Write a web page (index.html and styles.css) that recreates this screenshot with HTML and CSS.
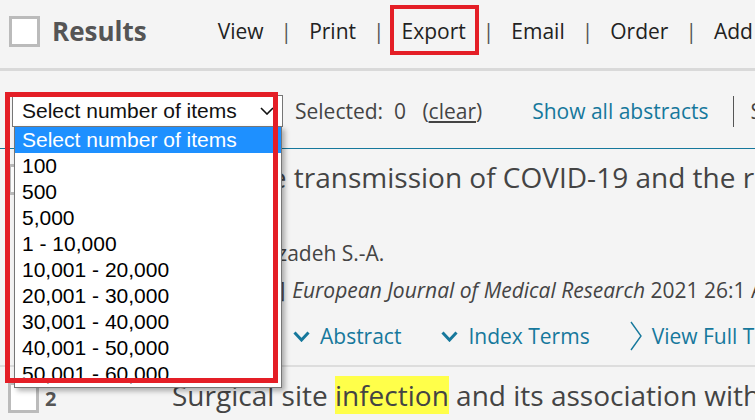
FILE: index.html
```html
<!DOCTYPE html>
<html lang="en">
<head>
    <meta charset="UTF-8">
    <meta name="viewport" content="width=device-width, initial-scale=1.0">
    <title>Results</title>
    <link rel="stylesheet" href="styles.css">
</head>
<body>
    <div class="page">
        <!-- Results header -->
        <header class="results-bar">
            <span class="checkbox big"></span>
            <h1>Results</h1>
            <nav class="actions">
                <a href="#">View</a><span class="sep">|</span>
                <a href="#">Print</a><span class="sep">|</span>
                <a href="#" class="export">Export</a><span class="sep">|</span>
                <a href="#">Email</a><span class="sep">|</span>
                <a href="#">Order</a><span class="sep">|</span>
                <a href="#">Add to My List</a>
            </nav>
        </header>

        <!-- Toolbar -->
        <div class="toolbar">
            <div class="select-wrap">
                <div class="select">
                    <span>Select number of items</span>
                    <svg class="select-arrow" width="14" height="8" viewBox="0 0 14 8"><path d="M1 1 L7 7 L13 1" fill="none" stroke="#111" stroke-width="1.6"/></svg>
                </div>
                <ul class="select-list">
                    <li class="picked">Select number of items</li>
                    <li>100</li>
                    <li>500</li>
                    <li>5,000</li>
                    <li>1 - 10,000</li>
                    <li>10,001 - 20,000</li>
                    <li>20,001 - 30,000</li>
                    <li>30,001 - 40,000</li>
                    <li>40,001 - 50,000</li>
                    <li>50,001 - 60,000</li>
                </ul>
                <div class="mark mark-select"></div>
            </div>
            <span class="selected">Selected:&nbsp; 0 &nbsp;&nbsp;(<a href="#">clear</a>)</span>
            <a href="#" class="link show-all">Show all abstracts</a>
            <span class="vbar"></span>
            <span class="sort">Sort by</span>
        </div>

        <!-- Result list -->
        <ol class="results">
            <li class="result">
                <span class="checkbox"></span>
                <span class="num">1</span>
                <div class="body">
                    <h2>Airborne transmission of COVID-19 and the role of air conditioning</h2>
                    <h2 class="title-end">units</h2>
                    <p class="authors">Abbassi Alizadeh S.-A.</p>
                    <p class="source"><span class="db">[MEDLINE]</span> <em>European Journal of Medical Research</em> 2021 26:1 Article Number 12</p>
                    <div class="links">
                        <a href="#" class="link">
                            <svg class="chev-down" width="17" height="11" viewBox="0 0 17 11"><path d="M1.5 1.5 L8.5 9 L15.5 1.5" fill="none" stroke="currentColor" stroke-width="3"/></svg>Abstract
                        </a>
                        <a href="#" class="link">
                            <svg class="chev-down" width="17" height="11" viewBox="0 0 17 11"><path d="M1.5 1.5 L8.5 9 L15.5 1.5" fill="none" stroke="currentColor" stroke-width="3"/></svg>Index Terms
                        </a>
                        <a href="#" class="link">
                            <svg class="chev-right" width="12" height="30" viewBox="0 0 12 30"><path d="M1 1 L11 15 L1 29" fill="none" stroke="currentColor" stroke-width="1.4"/></svg>View Full Text
                        </a>
                    </div>
                </div>
            </li>
            <li class="result">
                <span class="checkbox"></span>
                <span class="num">2</span>
                <div class="body">
                    <h2>Surgical site <mark>infection</mark> and its association with rheumatoid arthritis</h2>
                </div>
            </li>
        </ol>
    </div>
</body>
</html>
```

FILE: styles.css
```css
/* Global Styles */
* {
    margin: 0;
    padding: 0;
    box-sizing: border-box;
}

:root {
    --bg-color: #f4f4f4;
    --text-color: #444;
    --link-color: #16789c;
    --mark-color: #e41e26;
}

body {
    background-color: var(--bg-color);
    font-family: 'Open Sans', 'Noto Sans', sans-serif;
    color: var(--text-color);
    overflow: hidden;
}

a {
    color: inherit;
    text-decoration: none;
}

.page {
    width: 1100px;
    white-space: nowrap;
}

.checkbox {
    display: inline-block;
    width: 31px;
    height: 31px;
    background-color: #fff;
    border: 3px solid #bbb;
    flex-shrink: 0;
}

/* Results header */
.results-bar {
    display: flex;
    align-items: center;
    height: 71px;
    padding: 0 0 6px 9px;
    border-bottom: 3px solid #d9d9d9;
}

.results-bar h1 {
    margin-left: 12px;
    font-size: 26px;
    font-weight: 700;
    color: #555;
}

.actions {
    display: flex;
    align-items: center;
    margin-left: 71px;
    font-size: 21px;
    color: #222;
}

.actions .sep {
    margin: 0 17px;
    color: #555;
}

.export {
    position: relative;
}

.export::after {
    content: "";
    position: absolute;
    left: -12px;
    right: -13px;
    top: -12px;
    bottom: -10px;
    border: 4px solid var(--mark-color);
}

/* Toolbar */
.toolbar {
    display: flex;
    align-items: center;
    height: 78px;
    padding: 3px 0 0 12px;
    border-bottom: 1px solid var(--link-color);
    font-size: 21px;
}

.select-wrap {
    position: relative;
    z-index: 2;
}

.select {
    display: flex;
    align-items: center;
    justify-content: space-between;
    width: 271px;
    height: 32px;
    padding: 0 8px 0 9px;
    background-color: #fff;
    border: 1px solid #767676;
    font-family: 'Liberation Sans', Arial, sans-serif;
    font-size: 21px;
    color: #111;
}

.select-list {
    position: absolute;
    left: 2px;
    top: 31px;
    width: 268px;
    height: 262px;
    overflow: hidden;
    list-style: none;
    background-color: #fff;
    border: 1px solid #767676;
    box-shadow: 3px 3px 5px rgba(0, 0, 0, 0.3);
    font-family: 'Liberation Sans', Arial, sans-serif;
    font-size: 21px;
    color: #000;
}

.select-list li {
    height: 26px;
    line-height: 26px;
    padding-left: 7px;
}

.select-list li.picked {
    background-color: #1e90ff;
    color: #fff;
}

.mark-select {
    position: absolute;
    left: -7px;
    top: -3px;
    width: 273px;
    height: 291px;
    border: 5px solid var(--mark-color);
}

.selected {
    margin-left: 12px;
}

.selected a {
    text-decoration: underline;
}

.link {
    color: var(--link-color);
}

.show-all {
    margin-left: 50px;
}

.vbar {
    width: 1px;
    height: 31px;
    margin: 0 16px 0 25px;
    background-color: #555;
}

/* Result list */
.results {
    list-style: none;
}

.result {
    display: flex;
    align-items: flex-start;
    padding: 10px 0 13px 8px;
    border-bottom: 2px solid #ddd;
}

.result .checkbox {
    margin-top: 5px;
}

.num {
    width: 133px;
    padding-left: 6px;
    line-height: 36px;
    margin-top: 4px;
    font-size: 20px;
    font-weight: 700;
    color: #555;
}

.body h2 {
    font-size: 28px;
    font-weight: 400;
    line-height: 36px;
}

.body mark {
    background-color: #ffff4a;
    color: inherit;
}

.authors {
    margin-top: 6px;
    font-size: 21px;
    line-height: 32px;
}

.source {
    margin-top: 5px;
    font-size: 21px;
    line-height: 32px;
}

.source .db {
    letter-spacing: 1.2px;
}

.links {
    display: flex;
    align-items: center;
    gap: 40px;
    height: 32px;
    margin-top: 14px;
    margin-left: 121px;
    font-size: 21px;
}

.links a {
    display: flex;
    align-items: center;
}

.chev-down {
    margin-right: 10px;
}

.chev-right {
    margin-right: 10px;
}
```
